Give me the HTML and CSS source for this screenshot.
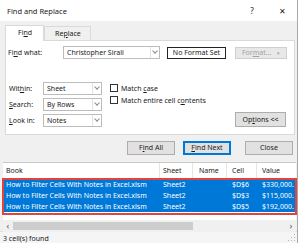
FILE: index.html
```html
<!DOCTYPE html>
<html lang="en">
<head>
    <meta charset="UTF-8">
    <title>Find and Replace</title>
    <link rel="stylesheet" href="styles.css">
</head>
<body>

<div class="dialog">
    <div class="titlebar">
        <span class="title">Find and Replace</span>
        <span class="help">?</span>
        <span class="close-x">&#x2715;</span>
    </div>

    <div class="tabs">
        <div class="tab active">Fi<u>n</u>d</div>
        <div class="tab">Re<u>p</u>lace</div>
    </div>

    <div class="panel">
        <div class="find-row">
            <label class="find-label">Fi<u>n</u>d what:</label>
            <div class="combo wide">
                <span class="combo-text">Christopher Sirali</span>
                <span class="chev"></span>
            </div>
            <div class="noformat">No Format Set</div>
            <div class="btn disabled format">For<u>m</u>at... <span class="small-arrow">&#9662;</span></div>
        </div>

        <div class="opt-area">
            <div class="opt-grid">
                <label>Wit<u>h</u>in:</label>
                <div class="combo"><span class="combo-text">Sheet</span><span class="chev"></span></div>
                <label><u>S</u>earch:</label>
                <div class="combo"><span class="combo-text">By Rows</span><span class="chev"></span></div>
                <label><u>L</u>ook in:</label>
                <div class="combo"><span class="combo-text">Notes</span><span class="chev"></span></div>
            </div>
            <div class="checks">
                <div class="check"><span class="box"></span><span>Match <u>c</u>ase</span></div>
                <div class="check"><span class="box"></span><span>Match entire cell c<u>o</u>ntents</span></div>
            </div>
            <div class="opt-btn-wrap">
                <div class="btn options">Op<u>t</u>ions &lt;&lt;</div>
            </div>
        </div>
    </div>

    <div class="actions">
        <div class="btn find-all">F<u>i</u>nd All</div>
        <div class="btn default"><u>F</u>ind Next</div>
        <div class="btn close">Close</div>
    </div>

    <div class="results">
        <div class="rhead">
            <span class="c-book">Book</span>
            <span class="c-sheet">Sheet</span>
            <span class="c-name">Name</span>
            <span class="c-cell">Cell</span>
            <span class="c-value">Value</span>
        </div>
        <div class="rrow">
            <span class="c-book">How to Filter Cells With Notes in Excel.xlsm</span>
            <span class="c-sheet">Sheet2</span>
            <span class="c-name"></span>
            <span class="c-cell">$D$6</span>
            <span class="c-value">$330,000.</span>
        </div>
        <div class="rrow">
            <span class="c-book">How to Filter Cells With Notes in Excel.xlsm</span>
            <span class="c-sheet">Sheet2</span>
            <span class="c-name"></span>
            <span class="c-cell">$D$3</span>
            <span class="c-value">$115,000.</span>
        </div>
        <div class="rrow">
            <span class="c-book">How to Filter Cells With Notes in Excel.xlsm</span>
            <span class="c-sheet">Sheet2</span>
            <span class="c-name"></span>
            <span class="c-cell">$D$5</span>
            <span class="c-value">$192,000.</span>
        </div>
        <div class="red-box"></div>
        <div class="hscroll">
            <span class="arr">&lsaquo;</span>
            <div class="track"><div class="thumb"></div></div>
            <span class="arr">&rsaquo;</span>
        </div>
    </div>

    <div class="status">
        <span>3 cell(s) found</span>
        <svg class="grip" width="8" height="8" viewBox="0 0 8 8">
            <rect x="6" y="0" width="1" height="1" fill="#b5b5b5"/>
            <rect x="3" y="3" width="1" height="1" fill="#b5b5b5"/>
            <rect x="6" y="3" width="1" height="1" fill="#b5b5b5"/>
            <rect x="0" y="6" width="1" height="1" fill="#b5b5b5"/>
            <rect x="3" y="6" width="1" height="1" fill="#b5b5b5"/>
            <rect x="6" y="6" width="1" height="1" fill="#b5b5b5"/>
        </svg>
    </div>
</div>

</body>
</html>
```

FILE: styles.css
```css
* {
    margin: 0;
    padding: 0;
    box-sizing: border-box;
}

body {
    width: 300px;
    height: 243px;
    overflow: hidden;
    background: #fff;
    font-family: "Noto Sans", sans-serif;
    font-size: 7px;
    color: #1a1a1a;
}

u {
    text-decoration: underline;
    text-underline-offset: 1px;
}

.dialog {
    width: 298px;
    height: 243px;
    background: #f0f0f0;
    border-right: 1px solid #a8a8a8;
    display: flex;
    flex-direction: column;
}

/* title bar */
.titlebar {
    height: 21px;
    background: #fff;
    display: flex;
    align-items: center;
    padding: 0 0 0 7px;
}

.title {
    font-size: 7.5px;
    flex: 1;
}

.help {
    font-size: 8px;
    width: 30px;
    text-align: center;
}

.close-x {
    font-size: 8px;
    width: 30px;
    text-align: center;
}

/* tabs */
.tabs {
    display: flex;
    padding: 4px 0 0 5px;
    height: 19px;
}

.tab {
    padding: 0 9px 0 10px;
    height: 15px;
    line-height: 14px;
    border: 1px solid #dadada;
    border-bottom: none;
    margin-top: 1px;
}

.tab.active {
    background: #fff;
    margin-top: 0;
    height: 16px;
    padding: 0 11px 0 12px;
    position: relative;
    z-index: 1;
    margin-bottom: -1px;
}

.panel {
    background: #fff;
    border: 1px solid #dadada;
    margin: 0 2px 0 5px;
    height: 95px;
    padding: 5px 0 0 2px;
}

.find-row {
    display: flex;
    align-items: center;
    height: 13px;
}

.find-label {
    width: 55px;
}

.combo {
    display: flex;
    height: 13px;
    border: 1px solid #bcbcbc;
    background: #fff;
}

.combo.wide {
    width: 97px;
}

.combo-text {
    flex: 1;
    padding-left: 3px;
    line-height: 11px;
}

.chev {
    width: 9px;
    border-left: 1px solid #e3e3e3;
    position: relative;
}

.chev::after {
    content: "";
    position: absolute;
    left: 2px;
    top: 2px;
    width: 3px;
    height: 3px;
    border-right: 1px solid #8a8a8a;
    border-bottom: 1px solid #8a8a8a;
    transform: rotate(45deg);
}

.noformat {
    margin-left: 7px;
    width: 59px;
    height: 12px;
    line-height: 10px;
    border: 1px solid #222;
    text-align: center;
}

.btn {
    height: 14px;
    line-height: 12px;
    border: 1px solid #adadad;
    background: #e1e1e1;
    text-align: center;
}

.btn.disabled {
    color: #a3a3a3;
    border-color: #cfcfcf;
    background: #e8e8e8;
}

.format {
    margin-left: 9px;
    width: 52px;
    height: 12px;
    line-height: 10px;
}

.small-arrow {
    font-size: 5px;
    margin-left: 4px;
}

.opt-area {
    display: flex;
    margin-top: 23px;
}

.opt-grid {
    display: grid;
    grid-template-columns: 34px 59px;
    row-gap: 3px;
    align-items: center;
    padding-left: 1px;
}

.opt-grid .combo {
    height: 13px;
}

.checks {
    margin-left: 8px;
    display: flex;
    flex-direction: column;
    gap: 2px;
    padding-top: 1px;
}

.check {
    display: flex;
    align-items: center;
    height: 10px;
}

.box {
    width: 8px;
    height: 8px;
    border: 1px solid #333;
    background: #fff;
    margin-right: 3px;
}

.opt-btn-wrap {
    flex: 1;
    display: flex;
    align-items: flex-end;
    justify-content: flex-end;
    padding-right: 8px;
}

.options {
    width: 51px;
    height: 15px;
    line-height: 13px;
}

/* buttons */
.actions {
    display: flex;
    justify-content: flex-end;
    padding: 6px 4px 0 0;
    height: 26px;
}

.actions .btn {
    width: 48px;
    height: 14px;
}

.actions .btn.default {
    margin-left: 8px;
    border: 1px solid #0078d7;
    box-shadow: inset 0 0 0 1px #0078d7;
}

.actions .btn.close {
    margin-left: 14px;
}

/* results */
.results {
    position: relative;
    margin: 1px 1px 0 3px;
    background: #fff;
    border-top: 1px solid #c8c8c8;
    height: 69px;
}

.rhead, .rrow {
    display: flex;
    white-space: nowrap;
}

.rhead {
    height: 15px;
    align-items: center;
}

.rhead span {
    border-right: 1px solid #e5e5e5;
    height: 15px;
    line-height: 16px;
}

.rrow {
    background: #0078d7;
    color: #fff;
    height: 11px;
    line-height: 11px;
}

.rrow:nth-of-type(2) {
    margin-top: 1px;
}

.c-book {
    width: 157px;
    padding-left: 3px;
    overflow: hidden;
}

.c-sheet {
    width: 33px;
    padding-left: 3px;
}

.c-name {
    width: 34px;
    padding-left: 6px;
}

.c-cell {
    width: 30px;
    padding-left: 5px;
}

.c-value {
    flex: 1;
    padding-left: 5px;
    overflow: hidden;
    border-right: none !important;
}

.red-box {
    position: absolute;
    left: -1px;
    top: 15px;
    width: 295px;
    height: 37px;
    border: 2px solid #e2433c;
}

.hscroll {
    display: flex;
    align-items: center;
    margin-top: 8px;
    height: 12px;
    background: #f0f0f0;
}

.arr {
    width: 10px;
    text-align: center;
    font-size: 9px;
    color: #555;
    line-height: 12px;
}

.track {
    flex: 1;
    height: 12px;
    padding: 2px 0;
}

.thumb {
    width: 180px;
    height: 8px;
    background: #cdcdcd;
}

.status {
    flex: 1;
    background: #f5f5f5;
    border-top: 1px solid #dedede;
    padding: 2px 1px 0 3px;
    display: flex;
    justify-content: space-between;
}

.grip {
    align-self: flex-end;
    margin-bottom: 1px;
}
```
